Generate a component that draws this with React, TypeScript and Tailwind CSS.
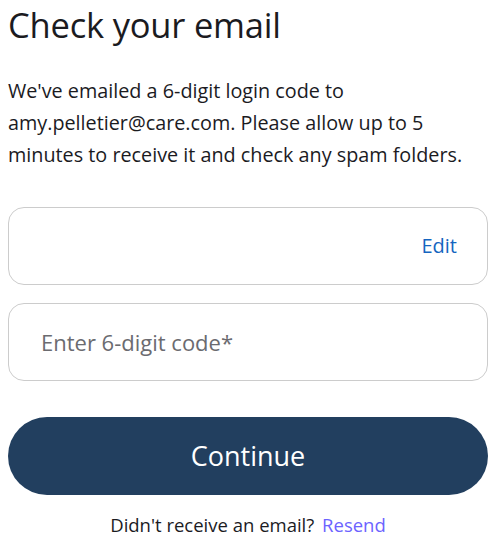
import React from 'react';

const App: React.FC = () => {
  return (
    <div className="min-h-screen bg-white text-[#1b1b1f] px-2 font-['Open_Sans',sans-serif]">
      {/* Heading */}
      <h1 className="text-[34.5px] leading-[50px] tracking-[-0.2px]">Check your email</h1>

      <p className="mt-[25px] text-[19.8px] leading-[32px]">
        We've emailed a 6-digit login code to amy.pelletier@care.com. Please allow up to 5 minutes to receive it and check any spam folders.
      </p>

      {/* Email field */}
      <div className="mt-[36px] h-[78px] border border-[#cccccc] rounded-[16px] flex items-center justify-end pr-[30px]">
        <button className="text-[#1565c0] text-[20px]">Edit</button>
      </div>

      {/* Code field */}
      <div className="mt-[18px] h-[78px] border border-[#cccccc] rounded-[16px] flex items-center px-[32px]">
        <input
          placeholder="Enter 6-digit code*"
          className="w-full outline-none text-[22px] placeholder:text-[#6b6b70] text-[#1b1b1f] bg-transparent"
        />
      </div>

      {/* Continue */}
      <button className="mt-[36px] w-full h-[78px] rounded-full bg-[#223f5f] text-white text-[27px]">
        Continue
      </button>

      <div className="mt-[16px] text-center text-[18.5px]">
        Didn't receive an email?{' '}
        <button className="ml-[3px] text-[#6c63ff]">Resend</button>
      </div>
    </div>
  );
};

export default App;
